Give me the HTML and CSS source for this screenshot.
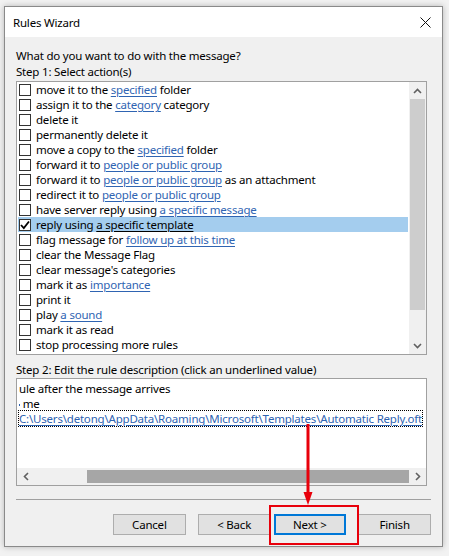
FILE: index.html
```html
<!DOCTYPE html>
<html lang="en">
<head>
    <meta charset="UTF-8">
    <meta name="viewport" content="width=device-width, initial-scale=1.0">
    <title>Rules Wizard</title>
    <link rel="stylesheet" href="styles.css">
</head>
<body>
    <div class="dialog">
        <div class="titlebar">
            <span class="title">Rules Wizard</span>
            <svg class="close" width="11" height="11" viewBox="0 0 11 11">
                <path d="M0.5 0.5 L10.5 10.5 M10.5 0.5 L0.5 10.5" stroke="#111" stroke-width="1" fill="none"/>
            </svg>
        </div>
        <div class="content">
            <p class="question">What do you want to do with the message?</p>
            <p class="label">Step 1: Select action(s)</p>
            <div class="listbox">
                <ul class="actions">
                    <li><span class="check"></span><span class="text">move it to the <a href="#">specified</a> folder</span></li>
                    <li><span class="check"></span><span class="text">assign it to the <a href="#">category</a> category</span></li>
                    <li><span class="check"></span><span class="text">delete it</span></li>
                    <li><span class="check"></span><span class="text">permanently delete it</span></li>
                    <li><span class="check"></span><span class="text">move a copy to the <a href="#">specified</a> folder</span></li>
                    <li><span class="check"></span><span class="text">forward it to <a href="#">people or public group</a></span></li>
                    <li><span class="check"></span><span class="text">forward it to <a href="#">people or public group</a> as an attachment</span></li>
                    <li><span class="check"></span><span class="text">redirect it to <a href="#">people or public group</a></span></li>
                    <li><span class="check"></span><span class="text">have server reply using <a href="#">a specific message</a></span></li>
                    <li class="selected"><span class="check"><svg width="10" height="10" viewBox="0 0 10 10"><path d="M1 5 L3.8 8 L9 1.5" stroke="#000" stroke-width="1.8" fill="none"/></svg></span><span class="text">reply using <a href="#">a specific template</a></span></li>
                    <li><span class="check"></span><span class="text">flag message for <a href="#">follow up at this time</a></span></li>
                    <li><span class="check"></span><span class="text">clear the Message Flag</span></li>
                    <li><span class="check"></span><span class="text">clear message's categories</span></li>
                    <li><span class="check"></span><span class="text">mark it as <a href="#">importance</a></span></li>
                    <li><span class="check"></span><span class="text">print it</span></li>
                    <li><span class="check"></span><span class="text">play <a href="#">a sound</a></span></li>
                    <li><span class="check"></span><span class="text">mark it as read</span></li>
                    <li><span class="check"></span><span class="text">stop processing more rules</span></li>
                </ul>
                <div class="vscroll">
                    <div class="arrow">
                        <svg width="9" height="6" viewBox="0 0 9 6"><path d="M1 5 L4.5 1.5 L8 5" stroke="#606060" stroke-width="1.6" fill="none"/></svg>
                    </div>
                    <div class="vthumb"></div>
                    <div class="track"></div>
                    <div class="arrow">
                        <svg width="9" height="6" viewBox="0 0 9 6"><path d="M1 1 L4.5 4.5 L8 1" stroke="#606060" stroke-width="1.6" fill="none"/></svg>
                    </div>
                </div>
            </div>

            <p class="label step2">Step 2: Edit the rule description (click an underlined value)</p>
            <div class="descbox">
                <div class="desc-text">
                    <div class="line">ule after the message arrives</div>
                    <div class="line"><span class="cut-link"></span> me</div>
                    <div class="line"><a href="#" class="focused">C:\Users\detong\AppData\Roaming\Microsoft\Templates\Automatic Reply.oft</a></div>
                </div>
                <div class="hscroll">
                    <div class="arrow">
                        <svg width="6" height="9" viewBox="0 0 6 9"><path d="M5 1 L1.5 4.5 L5 8" stroke="#606060" stroke-width="1.6" fill="none"/></svg>
                    </div>
                    <div class="hgap"></div>
                    <div class="hthumb"></div>
                    <div class="arrow">
                        <svg width="6" height="9" viewBox="0 0 6 9"><path d="M1 1 L4.5 4.5 L1 8" stroke="#606060" stroke-width="1.6" fill="none"/></svg>
                    </div>
                </div>
            </div>

            <div class="separator"></div>

            <div class="buttons">
                <button class="btn">Cancel</button>
                <button class="btn back">&lt; Back</button>
                <button class="btn next">Next &gt;</button>
                <button class="btn finish">Finish</button>
            </div>
        </div>
    </div>

    <!-- callout drawn over the dialog -->
    <svg class="callout-arrow" width="16" height="84" viewBox="0 0 16 84">
        <path d="M8 0 L8 70" stroke="#e8000b" stroke-width="3"/>
        <path d="M3.5 68 L12.5 68 L8 81 Z" fill="#e8000b"/>
    </svg>
    <div class="callout-box"></div>
</body>
</html>
```

FILE: styles.css
```css
body {
    margin: 0;
    width: 449px;
    height: 556px;
    overflow: hidden;
    position: relative;
    background-color: #f2f2f2;
    font-family: "Noto Sans", sans-serif;
    font-size: 11.5px;
    letter-spacing: -0.2px;
    color: #000;
}
p {
    margin: 0;
}
a {
    color: #2f64b2;
    text-decoration: underline;
    text-underline-offset: 2px;
}

/* dialog frame */
.dialog {
    margin: 6px 0 0 4px;
    width: 437px;
    height: 539px;
    border: 1px solid #8a8a8a;
    background-color: #f0f0f0;
    box-shadow: 0 0 6px rgba(0, 0, 0, 0.25);
    display: flex;
    flex-direction: column;
}
.titlebar {
    height: 30px;
    background-color: #fff;
    display: flex;
    align-items: center;
    justify-content: space-between;
    padding: 0 11px 0 8px;
}
.title {
    margin-top: 1px;
}
.content {
    flex: 1;
    padding: 11px 11px 0 11px;
}
.question,
.label {
    line-height: 15px;
    height: 15px;
}
.label {
    margin-top: 1px;
}

/* step 1 list */
.listbox {
    margin-top: 2px;
    width: 409px;
    height: 272px;
    border: 1px solid #a0a0a0;
    background-color: #fff;
    display: flex;
}
.actions {
    list-style: none;
    margin: 0;
    padding: 0 1px;
    flex: 1;
}
.actions li {
    height: 15px;
    line-height: 15px;
    display: flex;
    align-items: center;
    padding-left: 1px;
    white-space: pre;
}
.actions li.selected {
    background-color: #a4cdee;
}
.actions li.selected a {
    color: #000;
}
.check {
    width: 10px;
    height: 10px;
    border: 1px solid #333;
    background-color: #fff;
    margin-right: 5px;
    display: flex;
    align-items: center;
    justify-content: center;
    flex-shrink: 0;
}
.vscroll {
    width: 17px;
    background-color: #f0f0f0;
    display: flex;
    flex-direction: column;
}
.vscroll .arrow {
    height: 17px;
    display: flex;
    align-items: center;
    justify-content: center;
}
.vthumb {
    height: 211px;
    margin: 0 1px;
    background-color: #cdcdcd;
}
.vscroll .track {
    flex: 1;
}

/* step 2 description */
.step2 {
    margin-top: 7px;
}
.descbox {
    margin-top: 1px;
    width: 409px;
    height: 106px;
    border: 1px solid #a0a0a0;
    background-color: #fff;
    display: flex;
    flex-direction: column;
}
.desc-text {
    flex: 1;
    padding: 2px 0 0 2px;
    overflow: hidden;
}
.desc-text .line {
    height: 15px;
    line-height: 15px;
    white-space: nowrap;
}
.cut-link {
    display: inline-block;
    width: 1px;
    height: 2px;
    background-color: #2f64b2;
    vertical-align: middle;
}
.focused {
    outline: 1px dotted #000;
    outline-offset: 0;
}
.hscroll {
    height: 17px;
    background-color: #f0f0f0;
    display: flex;
}
.hscroll .arrow {
    width: 17px;
    display: flex;
    align-items: center;
    justify-content: center;
}
.hgap {
    width: 53px;
}
.hthumb {
    flex: 1;
    margin: 2px 0;
    background-color: #a6a6a6;
}

.separator {
    margin-top: 13px;
    width: 415px;
    height: 1px;
    background-color: #a0a0a0;
}

/* wizard buttons */
.buttons {
    display: flex;
    margin-top: 14px;
    padding-left: 97px;
}
.btn {
    width: 73px;
    height: 21px;
    font-family: "Noto Sans", sans-serif;
    font-size: 11.5px;
    letter-spacing: -0.2px;
    color: #000;
    background-color: #e1e1e1;
    border: 1px solid #adadad;
    padding: 0;
}
.back {
    margin-left: 12px;
}
.next {
    margin-left: 3px;
    border: 2px solid #0078d7;
}
.finish {
    margin-left: 12px;
}

.callout-arrow {
    position: absolute;
    left: 300px;
    top: 424px;
}
.callout-box {
    position: absolute;
    left: 269px;
    top: 505px;
    width: 86px;
    height: 36px;
    border: 2px solid #e8000b;
}
```
